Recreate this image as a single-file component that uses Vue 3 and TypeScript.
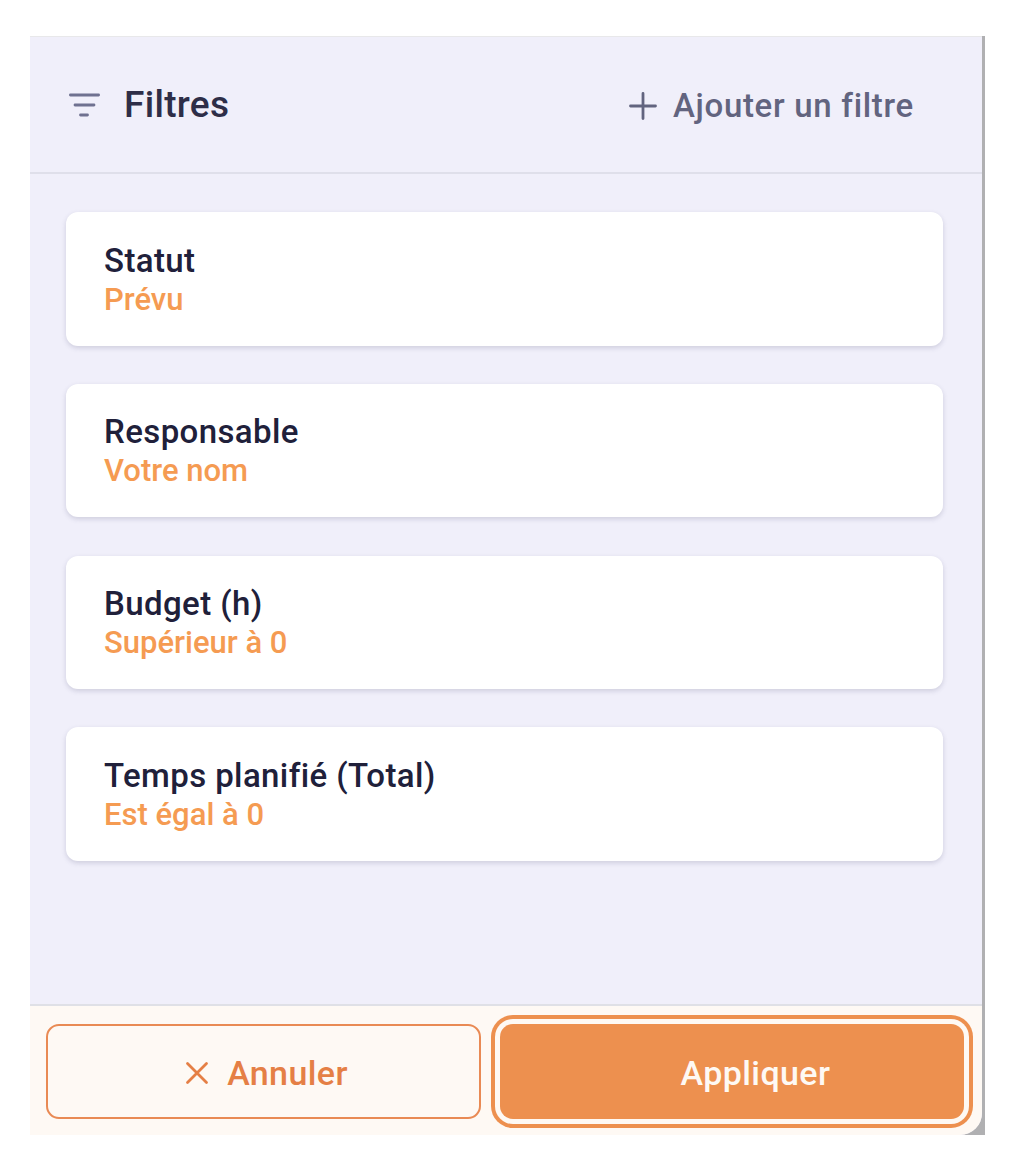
<script setup lang="ts">
interface Filter { label: string; value: string }
const filters: Filter[] = [
  { label: 'Statut', value: 'Prévu' },
  { label: 'Responsable', value: 'Votre nom' },
  { label: 'Budget (h)', value: 'Supérieur à 0' },
  { label: 'Temps planifié (Total)', value: 'Est égal à 0' },
]
</script>

<template>
  <div class="page">
    <div class="frame">
      <section class="panel">
        <header class="head">
          <div class="title">
            <svg class="filter-icon" width="32" height="28" viewBox="0 0 32 28" fill="none" stroke="#6f7190" stroke-width="2.800" stroke-linecap="round">
              <path d="M1.400 4H29.600M6 14H25M11.500 24H18.500" />
            </svg>
            <h1>Filtres</h1>
          </div>
          <button class="add" type="button">
            <svg width="28" height="28" viewBox="0 0 28 28" fill="none" stroke="#62647f" stroke-width="2.800" stroke-linecap="round">
              <path d="M14 1.500V26.500M1.500 14H26.500" />
            </svg>
            <span>Ajouter un filtre</span>
          </button>
        </header>
        <div class="list">
          <article v-for="f in filters" :key="f.label" class="card">
            <div class="label">{{ f.label }}</div>
            <div class="value">{{ f.value }}</div>
          </article>
        </div>
        <footer class="foot">
          <button class="btn cancel" type="button">
            <svg width="24" height="24" viewBox="0 0 24 24" fill="none" stroke="#e57f45" stroke-width="2.800" stroke-linecap="round">
              <path d="M2.500 2.500L21.500 21.500M21.500 2.500L2.500 21.500" />
            </svg>
            <span>Annuler</span>
          </button>
          <button class="btn apply" type="button">Appliquer</button>
        </footer>
      </section>
    </div>
  </div>
</template>

<style>
html, body { background: #fff; }
</style>

<style scoped>
.page {
  width: 1020px;
  height: 1170px;
  padding: 36px 0 0 30px;
  box-sizing: border-box;
  font-family: "Roboto", "Inter", "Liberation Sans", sans-serif;
}
.frame {
  width: 955px;
  height: 1099px;
  background: #b0b0b2;
}
.panel {
  width: 952px;
  height: 1099px;
  display: flex;
  flex-direction: column;
  background: #f0effa;
  border-top: 1px solid #e8e8ea;
  border-bottom-right-radius: 22px;
  box-sizing: border-box;
  overflow: hidden;
}
.head {
  height: 137px;
  flex: none;
  box-sizing: border-box;
  border-bottom: 2px solid #dfdfea;
  display: flex;
  align-items: center;
  justify-content: space-between;
  padding: 0 68px 0 39px;
}
.title {
  display: flex;
  align-items: center;
  gap: 23px;
}
.filter-icon { margin-top: 1px; }
h1 {
  margin: 0;
  font-size: 37px;
  line-height: 44px;
  font-weight: 500;
  letter-spacing: 0.3px;
  color: #2e2e48;
}
.add {
  display: flex;
  align-items: center;
  gap: 16px;
  padding: 2px 0 0;
  border: 0;
  background: none;
  font: inherit;
  font-size: 33px;
  font-weight: 500;
  letter-spacing: 0.7px;
  color: #62647f;
}
.list {
  flex: 1;
  display: flex;
  flex-direction: column;
  gap: 38.200px;
  padding: 38px 39px 0 36px;
}
.card {
  height: 133.600px;
  box-sizing: border-box;
  padding: 29.500px 38px 0;
  background: #fff;
  border-radius: 12px;
  box-shadow: 0 2px 5px rgba(70, 70, 110, 0.2);
}
.label {
  font-size: 33px;
  line-height: 38px;
  font-weight: 500;
  letter-spacing: 0.4px;
  color: #20203a;
}
.value {
  font-size: 31px;
  line-height: 39px;
  font-weight: 500;
  color: #f59b52;
}
.foot {
  height: 131px;
  flex: none;
  box-sizing: border-box;
  border-top: 2px solid #dfe0e6;
  background: #fef9f4;
  display: flex;
  align-items: center;
  gap: 19px;
  padding: 2px 18px 0 16px;
}
.btn {
  height: 95px;
  box-sizing: border-box;
  display: flex;
  align-items: center;
  justify-content: center;
  padding: 2px 0 0;
  border-radius: 13px;
  font: inherit;
  font-size: 34px;
  font-weight: 500;
  letter-spacing: 0.4px;
}
.cancel {
  width: 435px;
  gap: 18px;
  padding-left: 6px;
  background: transparent;
  border: 2px solid #e98a54;
  color: #e57f45;
}
.apply {
  flex: 1;
  padding-left: 47px;
  background: #ed904f;
  border: 0;
  color: #fef9f4;
  box-shadow: 0 0 0 5px #fef9f4, 0 0 0 9px #ed904f;
}
</style>
